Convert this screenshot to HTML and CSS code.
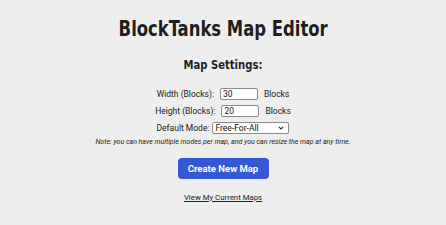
FILE: index.html
```html
<!DOCTYPE html>
<html>
<head>
  <meta charset="utf-8">
  <title>BlockTanks Map Editor</title>
  <link rel="stylesheet" href="styles.css">
</head>
<body>
  <div class="page">
    <h1 class="title">BlockTanks Map Editor</h1>
    <h2 class="subtitle">Map Settings:</h2>
    <div class="row">
      <label for="w">Width (Blocks):</label>
      <input id="w" class="num" type="text" value="30">
      <span>Blocks</span>
    </div>
    <div class="row">
      <label for="h">Height (Blocks):</label>
      <input id="h" class="num" type="text" value="20">
      <span>Blocks</span>
    </div>
    <div class="row mode-row">
      <label for="m">Default Mode:</label>
      <select id="m" class="mode">
        <option>Free-For-All</option>
      </select>
    </div>
    <p class="note">Note: you can have multiple modes per map, and you can resize the map at any time.</p>
    <button class="create">Create New Map</button>
    <a class="maps" href="#">View My Current Maps</a>
  </div>
</body>
</html>
```

FILE: styles.css
```css
html, body {
  margin: 0;
  background: #eeeeee;
  font-family: Roboto, "Liberation Sans", sans-serif;
  color: #222;
}
.page {
  display: flex;
  flex-direction: column;
  align-items: center;
  padding-top: 15px;
}
.title {
  margin: 0;
  font-family: "DejaVu Sans Condensed", "DejaVu Sans", sans-serif;
  font-weight: bold;
  font-size: 21px;
  line-height: 28px;
  color: #1e1e1e;
  transform: scaleX(0.87);
}
.subtitle {
  margin: 14px 0 12px;
  font-family: "DejaVu Sans Condensed", "DejaVu Sans", sans-serif;
  font-weight: bold;
  font-size: 13px;
  line-height: 16px;
  color: #1e1e1e;
  transform: scaleX(0.86);
}
.row {
  display: flex;
  align-items: center;
  gap: 5px;
  font-size: 8.5px;
  height: 17px;
}
.mode-row {
  gap: 3px;
}
.num {
  box-sizing: border-box;
  width: 38px;
  height: 12px;
  font-family: Roboto, "Liberation Sans", sans-serif;
  font-size: 8.5px;
  color: #111;
  padding: 0 2px;
  border: 1px solid #8a8a8a;
  border-radius: 2px;
  background: #fff;
  margin: 0 1px;
}
.mode {
  box-sizing: border-box;
  width: 77px;
  height: 12px;
  font-family: Roboto, "Liberation Sans", sans-serif;
  font-size: 8.5px;
  color: #111;
  padding: 0 2px;
  border: 1px solid #8a8a8a;
  border-radius: 2px;
  appearance: none;
  -webkit-appearance: none;
  background: #fff url("data:image/svg+xml,%3Csvg xmlns='http://www.w3.org/2000/svg' width='6' height='4' viewBox='0 0 6 4'%3E%3Cpath d='M0.8 0.8 L3 3 L5.2 0.8' fill='none' stroke='%23333' stroke-width='1.1'/%3E%3C/svg%3E") no-repeat right 4px center;
}
.note {
  margin: 2px 0 0;
  font-style: italic;
  font-size: 7px;
  color: #222;
}
.create {
  margin-top: 12px;
  width: 91px;
  height: 21px;
  border: none;
  border-radius: 4px;
  background: #3558d6;
  color: #fff;
  font-family: Roboto, "Liberation Sans", sans-serif;
  font-weight: bold;
  font-size: 9.5px;
}
.maps {
  margin-top: 14px;
  font-size: 7.8px;
  color: #222;
}
```
